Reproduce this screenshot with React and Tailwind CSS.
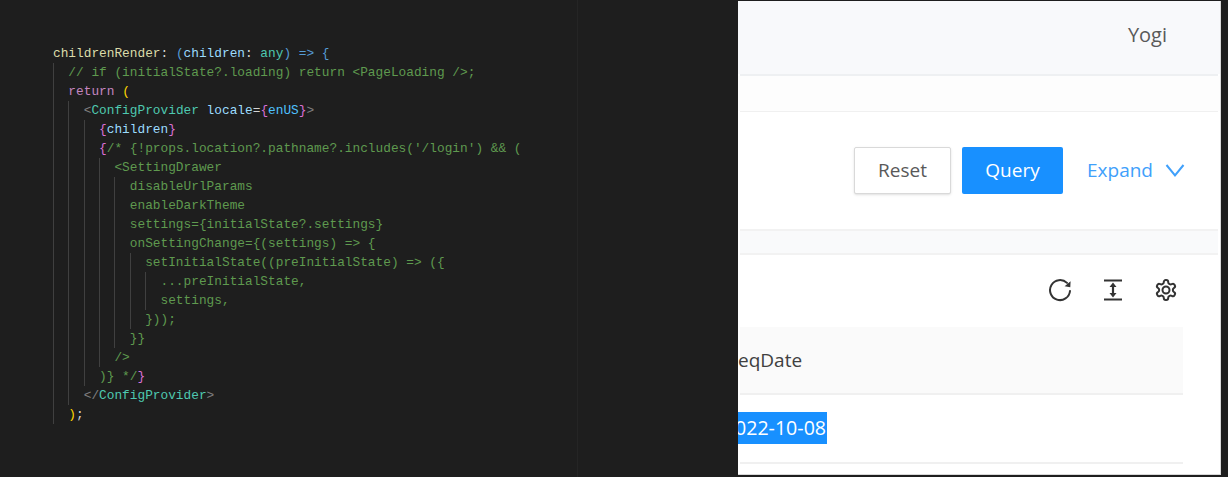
const PLAIN = 'text-[#d4d4d4]'
const COMMENT = 'text-[#5f9a4f]'
const BLUE = 'text-[#569cd6]'
const PINK = 'text-[#da70d6]'
const GRAY = 'text-[#808080]'
const TEAL = 'text-[#4ec9b0]'
const VAR = 'text-[#9cdcfe]'

const lines = [
  { indent: 0, parts: [['childrenRender', 'text-[#dcdcaa]'], [': ', PLAIN], ['(', BLUE], ['children', VAR], [': ', PLAIN], ['any', TEAL], [')', BLUE], [' => ', BLUE], ['{', BLUE]] },
  { indent: 1, parts: [['// if (initialState?.loading) return <PageLoading />;', COMMENT]] },
  { indent: 1, parts: [['return', 'text-[#c586c0]'], [' ', PLAIN], ['(', 'text-[#ffd700]']] },
  { indent: 2, parts: [['<', GRAY], ['ConfigProvider', TEAL], [' ', PLAIN], ['locale', VAR], ['=', PLAIN], ['{', PINK], ['enUS', 'text-[#4fc1ff]'], ['}', PINK], ['>', GRAY]] },
  { indent: 3, parts: [['{', PINK], ['children', VAR], ['}', PINK]] },
  { indent: 3, parts: [['{', PINK], ["/* {!props.location?.pathname?.includes('/login') && (", COMMENT]] },
  { indent: 4, parts: [['<SettingDrawer', COMMENT]] },
  { indent: 5, parts: [['disableUrlParams', COMMENT]] },
  { indent: 5, parts: [['enableDarkTheme', COMMENT]] },
  { indent: 5, parts: [['settings={initialState?.settings}', COMMENT]] },
  { indent: 5, parts: [['onSettingChange={(settings) => {', COMMENT]] },
  { indent: 6, parts: [['setInitialState((preInitialState) => ({', COMMENT]] },
  { indent: 7, parts: [['...preInitialState,', COMMENT]] },
  { indent: 7, parts: [['settings,', COMMENT]] },
  { indent: 6, parts: [['}));', COMMENT]] },
  { indent: 5, parts: [['}}', COMMENT]] },
  { indent: 4, parts: [['/>', COMMENT]] },
  { indent: 3, parts: [[')} */', COMMENT], ['}', PINK]] },
  { indent: 2, parts: [['</', GRAY], ['ConfigProvider', TEAL], ['>', GRAY]] },
  { indent: 1, parts: [[')', 'text-[#ffd700]'], [';', PLAIN]] },
]

function CodeLine({ line }) {
  return (
    <div className="flex h-[19px] items-center leading-[19px] whitespace-pre">
      {Array.from({ length: line.indent }).map((_, i) => (
        <span key={i} className="h-full w-[15.36px] shrink-0 border-l border-[#404040]" />
      ))}
      <span>
        {line.parts.map(([text, color], i) => (
          <span key={i} className={color}>{text}</span>
        ))}
      </span>
    </div>
  )
}

function ReloadIcon() {
  return (
    <svg width="24" height="24" viewBox="0 0 24 24" fill="none" stroke="#333" strokeWidth="2" strokeLinecap="round">
      <path d="M22 13a10 10 0 1 1-3-8.1" />
      <path d="M22.6 3.2l-.3 6-5.7-.9z" fill="#333" stroke="none" />
    </svg>
  )
}

function DensityIcon() {
  return (
    <svg width="20" height="24" viewBox="0 0 20 24" fill="none" stroke="#333" strokeWidth="2">
      <path d="M1 2.5h18M1 21.5h18" />
      <path d="M10 7v10" strokeWidth="2.2" />
      <path d="M6.5 9l3.5-4.5L13.5 9zM6.5 15l3.5 4.5 3.5-4.5z" fill="#333" stroke="none" />
    </svg>
  )
}

function GearIcon() {
  return (
    <svg width="24" height="24" viewBox="0 0 24 24" fill="none" stroke="#333" strokeWidth="2" strokeLinejoin="round">
      <path d="M12.22 2h-.44a2 2 0 0 0-2 2v.18a2 2 0 0 1-1 1.73l-.43.25a2 2 0 0 1-2 0l-.15-.08a2 2 0 0 0-2.73.73l-.22.38a2 2 0 0 0 .73 2.73l.15.1a2 2 0 0 1 1 1.72v.51a2 2 0 0 1-1 1.74l-.15.09a2 2 0 0 0-.73 2.73l.22.38a2 2 0 0 0 2.73.73l.15-.08a2 2 0 0 1 2 0l.43.25a2 2 0 0 1 1 1.73V20a2 2 0 0 0 2 2h.44a2 2 0 0 0 2-2v-.18a2 2 0 0 1 1-1.73l.43-.25a2 2 0 0 1 2 0l.15.08a2 2 0 0 0 2.73-.73l.22-.39a2 2 0 0 0-.73-2.73l-.15-.08a2 2 0 0 1-1-1.74v-.5a2 2 0 0 1 1-1.74l.15-.09a2 2 0 0 0 .73-2.73l-.22-.38a2 2 0 0 0-2.73-.73l-.15.08a2 2 0 0 1-2 0l-.43-.25a2 2 0 0 1-1-1.73V4a2 2 0 0 0-2-2z" />
      <circle cx="12" cy="12" r="3.5" />
    </svg>
  )
}

export default function App() {
  return (
    <div className="flex h-[477px] w-[1228px] overflow-hidden bg-[#1e1e1e]">
      <div className="w-[578px] shrink-0 border-r border-[#252525] pl-[53px] pt-[44px] font-['Liberation_Mono',monospace] text-[12.8px]">
        {lines.map((line, i) => (
          <CodeLine key={i} line={line} />
        ))}
      </div>

      <div className="ml-[160px] mt-px flex h-[474px] w-[483px] flex-col overflow-hidden border-r border-b border-[#d8d8d8] bg-white font-['Open_Sans',sans-serif] text-[#595959]">
        <div className="flex h-[73px] shrink-0 items-start justify-end bg-[#f8f9fb] pr-[53px] pt-[21px] text-[20px] leading-[26px]">
          Yogi
        </div>
        <div className="mx-[2px] h-[2px] shrink-0 bg-[#eef0f2]" />
        <div className="h-[35px] shrink-0 bg-[#fdfdfd]" />
        <div className="mx-[2px] h-px shrink-0 bg-[#f0f0f0]" />
        <div className="flex h-[117px] shrink-0 items-start justify-end pr-[35px] pt-[35px]">
          <button className="h-[47px] w-[97px] rounded-[2px] border border-[#d9d9d9] bg-white text-[19px] text-[#595959] shadow-sm">Reset</button>
          <button className="ml-[11px] h-[47px] w-[101px] rounded-[2px] bg-[#1890ff] text-[19px] font-medium text-white">Query</button>
          <span className="ml-[24px] flex h-[47px] items-center text-[19px] text-[#40a0fb]">
            Expand
            <svg width="20" height="15" viewBox="0 0 20 15" fill="none" stroke="#40a0fb" strokeWidth="2" className="ml-[12px]">
              <path d="M1.5 2l8.5 10.5L18.5 2" />
            </svg>
          </span>
        </div>
        <div className="mx-[2px] h-[26px] shrink-0 border-y-2 border-[#f2f2f2] bg-[#f9fafb]" />
        <div className="flex min-h-0 flex-1 flex-col pl-[2px] pr-[37px]">
          <div className="flex h-[72px] shrink-0 items-start justify-end gap-[31px] pr-[5px] pt-[23px]">
            <ReloadIcon />
            <DensityIcon />
            <GearIcon />
          </div>
          <div className="flex h-[68px] shrink-0 items-center border-b-2 border-[#f0f0f0] bg-[#fafafa] whitespace-nowrap text-[19px] font-medium text-[#404040]">
            <span className="-ml-[2px]">eqDate</span>
          </div>
          <div className="flex h-[69px] shrink-0 items-center border-b-2 border-[#f0f0f0] pb-[2px]">
            <span className="-ml-[5px] bg-[#1890ff] pr-px text-[19.6px] leading-[32px] text-white">022-10-08</span>
          </div>
        </div>
      </div>
    </div>
  )
}
